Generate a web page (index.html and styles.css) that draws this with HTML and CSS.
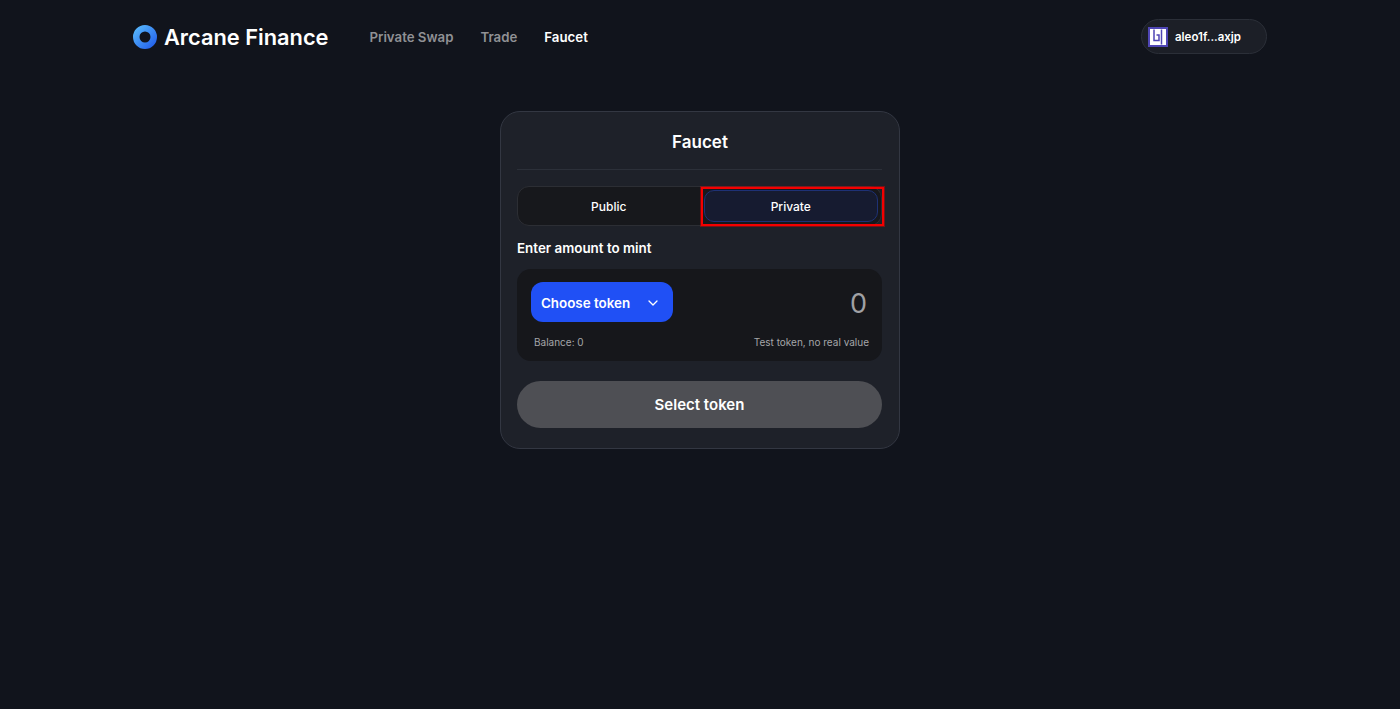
FILE: index.html
```html
<!DOCTYPE html>
<html lang="en">
<head>
  <meta charset="UTF-8">
  <title>Arcane Finance - Faucet</title>
  <link rel="stylesheet" href="styles.css">
</head>
<body>
  <header class="topbar">
    <div class="brand">
      <svg class="brand-logo" width="24" height="24" viewBox="0 0 24 24">
        <defs>
          <linearGradient id="ringGrad" x1="0" y1="0" x2="1" y2="1">
            <stop offset="0" stop-color="#55b4fb"/>
            <stop offset="1" stop-color="#2563eb"/>
          </linearGradient>
        </defs>
        <circle cx="12" cy="12" r="8.75" fill="none" stroke="url(#ringGrad)" stroke-width="6.5"/>
      </svg>
      <span class="brand-name">Arcane Finance</span>
    </div>
    <nav class="nav">
      <a class="nav-link">Private Swap</a>
      <a class="nav-link">Trade</a>
      <a class="nav-link active">Faucet</a>
    </nav>
    <div class="wallet">
      <svg class="wallet-icon" width="20" height="20" viewBox="0 0 20 20">
        <rect width="20" height="20" fill="#4f46b5"/>
        <rect x="2" y="2" width="16" height="16" fill="#fff"/>
        <path d="M6 2.5V13.5H11V8H8.5M13.5 2.5V17.5" fill="none" stroke="#4f46b5" stroke-width="1.5"/>
      </svg>
      <span>aleo1f...axjp</span>
    </div>
  </header>

  <main class="page">
    <section class="card">
      <h2 class="card-title">Faucet</h2>
      <div class="tabs">
        <button class="tab">Public</button>
        <button class="tab selected">Private</button>
        <div class="highlight"></div>
      </div>
      <div class="field-label">Enter amount to mint</div>
      <div class="panel">
        <div class="panel-row">
          <button class="token-btn">
            Choose token
            <svg width="10" height="6" viewBox="0 0 10 6"><path d="M1 1l4 4 4-4" fill="none" stroke="#fff" stroke-width="1.3" stroke-linecap="round" stroke-linejoin="round"/></svg>
          </button>
          <span class="amount">0</span>
        </div>
        <div class="panel-foot">
          <span>Balance: 0</span>
          <span>Test token, no real value</span>
        </div>
      </div>
      <button class="submit">Select token</button>
    </section>
  </main>
</body>
</html>
```

FILE: styles.css
```css
* {
  box-sizing: border-box;
}
body {
  margin: 0;
  height: 709px;
  overflow: hidden;
  background-color: #11141c;
  color: #fff;
  font-family: Inter, 'Noto Sans', sans-serif;
}
button {
  font-family: inherit;
  border: none;
  color: #fff;
}
.topbar {
  display: flex;
  align-items: center;
  height: 73px;
  padding: 0 133px;
}
.brand {
  display: flex;
  align-items: center;
  gap: 7px;
}
.brand-name {
  font-size: 21.8px;
  font-weight: 600;
}
.nav {
  display: flex;
  gap: 27px;
  margin-left: 41px;
}
.nav-link {
  font-size: 13.25px;
  font-weight: 600;
  color: #909195;
}
.nav-link.active {
  color: #fff;
}
.wallet {
  display: flex;
  align-items: center;
  gap: 7px;
  margin-left: auto;
  width: 126px;
  height: 35px;
  padding-left: 6px;
  border: 1px solid #2b2f38;
  border-radius: 18px;
  background-color: #1c1f27;
  font-size: 11.5px;
  font-weight: 600;
}
.page {
  display: flex;
  justify-content: center;
  padding-top: 38px;
}
.card {
  width: 400px;
  height: 338px;
  padding: 0 17px 0 16px;
  border: 1px solid #333742;
  border-radius: 20px;
  background-color: #1e2129;
}
.card-title {
  margin: 0;
  height: 58px;
  padding-left: 1px;
  line-height: 60px;
  border-bottom: 1px solid #2c3039;
  text-align: center;
  font-size: 17px;
  font-weight: 600;
}
.tabs {
  position: relative;
  display: grid;
  grid-template-columns: 1fr 1fr;
  height: 40px;
  margin-top: 16px;
  border: 1px solid #2c2e34;
  border-radius: 12px;
  background-color: #17181c;
}
.tab {
  background: none;
  font-size: 12px;
  font-weight: 500;
  border-radius: 10px;
}
.tab.selected {
  margin: 3px 3px 3px 4px;
  border: 1px solid #1e3175;
  background-color: #161b30;
}
.highlight {
  position: absolute;
  top: 0;
  right: -3px;
  width: 183px;
  height: 39px;
  border: 2px solid #f40000;
  box-shadow: 0 0 0 1px rgba(244, 0, 0, 0.4);
}
.field-label {
  margin-top: 14px;
  font-size: 13.4px;
  font-weight: 600;
  line-height: 17px;
}
.panel {
  height: 92px;
  margin-top: 12px;
  padding: 13px 13px 0 14px;
  border-radius: 14px;
  background-color: #16171b;
}
.panel-row {
  display: flex;
  align-items: center;
  justify-content: space-between;
}
.token-btn {
  display: flex;
  align-items: center;
  justify-content: space-between;
  width: 142px;
  height: 40px;
  padding: 1px 15px 0 10px;
  border-radius: 12px;
  background-color: #2050f5;
  font-size: 13.4px;
  font-weight: 600;
}
.amount {
  margin: 2px 2px 0 0;
  font-size: 27px;
  color: #a0a1a4;
}
.panel-foot {
  display: flex;
  justify-content: space-between;
  margin-top: 14px;
  padding-left: 3px;
  font-size: 10px;
  line-height: 13px;
  color: #a5a6a9;
}
.submit {
  display: block;
  width: 100%;
  height: 47px;
  margin-top: 20px;
  border-radius: 24px;
  background-color: #4e4f54;
  font-size: 15px;
  font-weight: 600;
}
```
